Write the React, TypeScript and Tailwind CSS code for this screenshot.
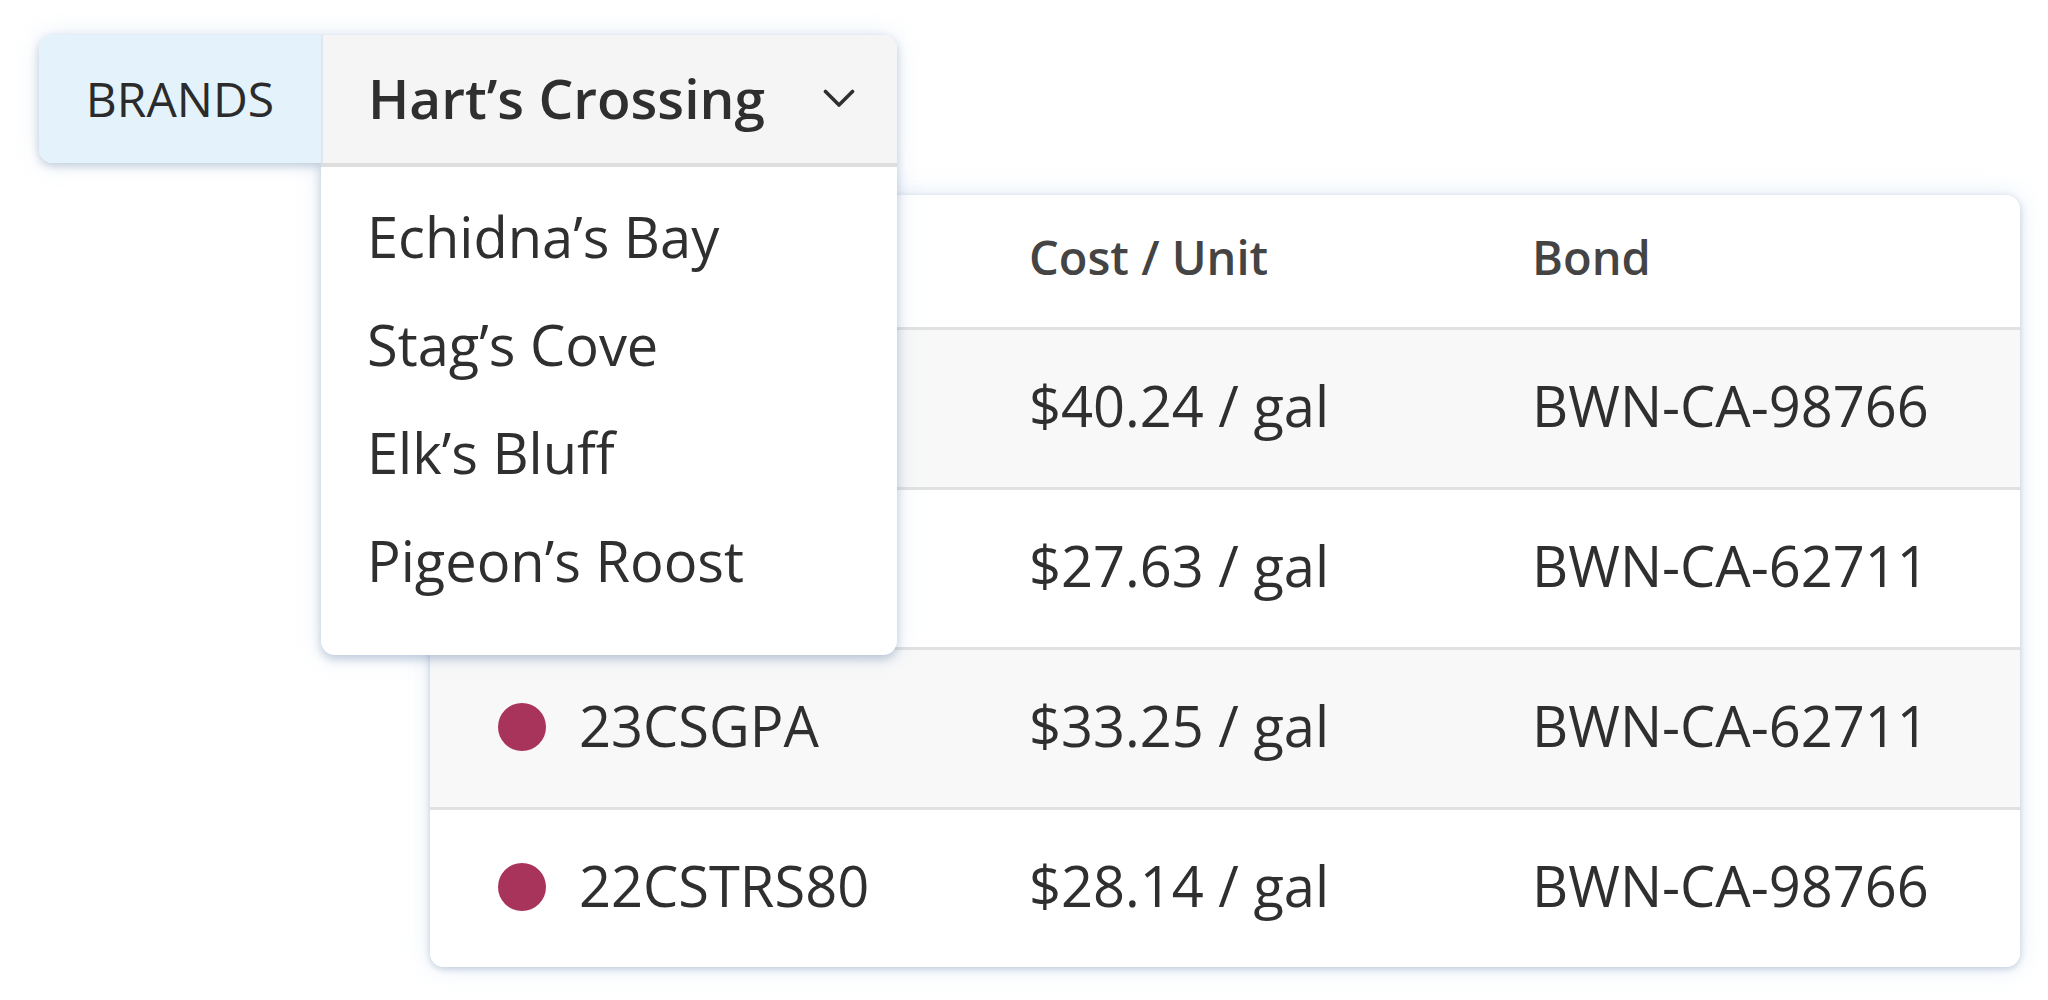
import { useState } from "react";

const brands = ["Echidna’s Bay", "Stag’s Cove", "Elk’s Bluff", "Pigeon’s Roost"];

// first two lots sit under the open menu, so they are left blank
const rows = [
  { lot: "", cost: "$40.24 / gal", bond: "BWN-CA-98766" },
  { lot: "", cost: "$27.63 / gal", bond: "BWN-CA-62711" },
  { lot: "23CSGPA", cost: "$33.25 / gal", bond: "BWN-CA-62711" },
  { lot: "22CSTRS80", cost: "$28.14 / gal", bond: "BWN-CA-98766" },
];

function Chevron() {
  return (
    <svg width="32" height="19" viewBox="0 0 32 19" fill="none" className="shrink-0">
      <path d="M2.5 2.5 L16 16 L29.5 2.5" stroke="#2f2f2f" strokeWidth="3.6" strokeLinecap="round" strokeLinejoin="round" />
    </svg>
  );
}

function BrandSelect() {
  const [open] = useState(true);
  const [selected] = useState("Hart’s Crossing");

  return (
    <div className="relative z-20 flex h-[128px] w-[858px] rounded-tl-[14px] rounded-tr-[14px] rounded-bl-[14px] shadow-[0_3px_8px_rgba(80,110,150,0.3),0_0_22px_rgba(150,185,225,0.25)]">
      {open && (
        <div className="absolute left-[282px] top-[128px] w-[576px] rounded-b-[14px] border-t-[4px] border-[#dedede] bg-white pt-[15px] pb-[41px] shadow-[0_4px_10px_rgba(80,110,150,0.32),0_0_24px_rgba(150,185,225,0.25)]">
          {brands.map((brand) => (
            <div key={brand} className="flex h-[108px] items-center pl-[46px] text-[56px] text-[#2f2f2f]">
              {brand}
            </div>
          ))}
        </div>
      )}
      <div className="relative flex w-[282px] items-center justify-center rounded-l-[14px] bg-[#e4f2fb] text-[48px] uppercase text-[#2b2b2b]">
        Brands
      </div>
      <div className="relative flex flex-1 items-center justify-between rounded-tr-[14px] border-l-[2px] border-[#dfe7ee] bg-[#f5f5f5] pb-[2px] pl-[45px] pr-[42px]">
        <span className="text-[55px] font-semibold text-[#2f2f2f]">{selected}</span>
        <Chevron />
      </div>
    </div>
  );
}

function CostTable() {
  return (
    <div className="ml-[391px] mt-[32px] w-[1590px] overflow-hidden rounded-[14px] bg-white shadow-[0_2px_6px_rgba(80,110,150,0.3),0_0_24px_rgba(150,185,225,0.28)]">
      <div className="grid h-[132px] grid-cols-[531px_503px_1fr] items-center pb-[8px] pl-[68px] text-[47px] font-semibold text-[#444444]">
        <span />
        <span>Cost / Unit</span>
        <span>Bond</span>
      </div>
      {rows.map((row, index) => (
        <div
          key={row.cost + index}
          className={`grid h-[160px] grid-cols-[531px_503px_1fr] items-center border-t-[3px] border-[#e1e1e1] pb-[7px] pl-[68px] text-[56px] text-[#2f2f2f] ${
            index % 2 === 0 ? "bg-[#f8f8f8]" : "bg-white"
          }`}
        >
          <div className="flex items-center gap-[33px]">
            {row.lot && (
              <>
                <span className="mt-[3px] h-[48px] w-[48px] rounded-full bg-[#a9345b]" />
                <span>{row.lot}</span>
              </>
            )}
          </div>
          <span>{row.cost}</span>
          <span>{row.bond}</span>
        </div>
      ))}
    </div>
  );
}

export default function App() {
  return (
    <div className="h-[1000px] w-[2048px] overflow-hidden bg-white pl-[39px] pt-[35px] font-['Open_Sans',sans-serif]">
      <BrandSelect />
      <CostTable />
    </div>
  );
}
